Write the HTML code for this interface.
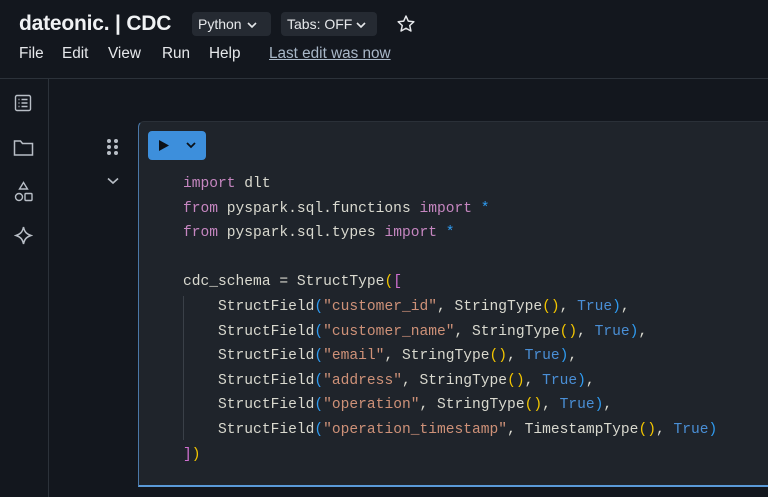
<!DOCTYPE html>
<html><head><style>
*{margin:0;padding:0;box-sizing:border-box}
body{width:768px;height:497px;background:#13171e;overflow:hidden;position:relative;font-family:"Liberation Sans",sans-serif;color:#e6e8eb}
.title{position:absolute;left:19px;top:12px;font-size:21px;font-weight:bold;color:#f0f2f4;letter-spacing:-0.2px}
.pill{position:absolute;top:12px;height:24px;background:#252a32;border-radius:4px;font-size:14px;line-height:24px;padding-left:6px;color:#e6e8eb}
.menu{position:absolute;top:45px;font-size:15.3px;color:#e6e8eb}
.hr{position:absolute;left:0;top:78px;width:768px;height:1px;background:#2c323a}
.vr{position:absolute;left:48px;top:79px;width:1px;height:418px;background:#2c323a}
.cell{position:absolute;left:138px;top:121px;width:640px;height:366px;background:#1f242b;border-left:1px solid #4a78a8;border-bottom:2px solid #5a9ad8;border-top:1px solid #2a3038;border-top-left-radius:6px}
.run{position:absolute;left:148px;top:131px;width:58px;height:29px;background:#3d8fdc;border-radius:4px}
.code{position:absolute;left:183px;top:172px;font-family:"Liberation Mono",monospace;font-size:14.6px;line-height:24.6px;white-space:pre;color:#d9d9cf}
.k{color:#c586c0}.s{color:#ce9178}.t{color:#4a8fd6}.y{color:#f2c500}.b{color:#2f9bf0}.p{color:#d070d0}
.guide{position:absolute;left:183px;top:296px;width:1px;height:144px;background:#3a4048}
</style></head><body>
<div class="title">dateonic. | CDC</div>
<div class="pill" style="left:192px;width:79px">Python <svg width="10" height="8" viewBox="0 0 10 8" style="margin-left:2px"><path d="M1 2l4 4 4-4" stroke="#e6e8eb" stroke-width="1.6" fill="none"/></svg></div>
<div class="pill" style="left:281px;width:96px">Tabs: OFF <svg width="10" height="8" viewBox="0 0 10 8"><path d="M1 2l4 4 4-4" stroke="#e6e8eb" stroke-width="1.6" fill="none"/></svg></div>
<svg style="position:absolute;left:396px;top:14px" width="20" height="20" viewBox="0 0 24 24"><path d="M12 2.5l2.8 6.1 6.6.7-4.9 4.5 1.4 6.6L12 17.1l-5.9 3.3 1.4-6.6-4.9-4.5 6.6-.7z" fill="none" stroke="#e6e8eb" stroke-width="1.8" stroke-linejoin="round"/></svg>
<div class="menu" style="left:19px">File</div>
<div class="menu" style="left:62px">Edit</div>
<div class="menu" style="left:108px">View</div>
<div class="menu" style="left:162px">Run</div>
<div class="menu" style="left:209px">Help</div>
<div class="menu" style="left:269px;color:#a9b8c8;text-decoration:underline">Last edit was now</div>
<div class="hr"></div><div class="vr"></div>
<svg style="position:absolute;left:14px;top:94px" width="18" height="18" viewBox="0 0 18 18" fill="none" stroke="#b8bec6" stroke-width="1.4"><rect x="1.5" y="1.5" width="15" height="15" rx="1.5"/><path d="M4.5 5.5h1M4.5 9h1M4.5 12.5h1M7.5 5.5h6M7.5 9h6M7.5 12.5h6"/></svg>
<svg style="position:absolute;left:13px;top:139px" width="21" height="18" viewBox="0 0 21 18" fill="none" stroke="#b8bec6" stroke-width="1.5"><path d="M1.5 2h6l2 2.5h10v11.5h-18z"/></svg>
<svg style="position:absolute;left:14px;top:181px" width="19" height="22" viewBox="0 0 19 22" fill="none" stroke="#b8bec6" stroke-width="1.4"><path d="M9.5 1.5l4 6.5h-8z"/><circle cx="5" cy="16" r="3.5"/><rect x="11" y="12.5" width="7" height="7" rx="1"/></svg>
<svg style="position:absolute;left:14px;top:225px" width="19" height="22" viewBox="0 0 19 22" fill="none" stroke="#b8bec6" stroke-width="1.5"><path d="M9.5 2c1 5 3 7 7.5 8.5-4.5 1.5-6.5 3.5-7.5 8.5-1-5-3-7-7.5-8.5 4.5-1.5 6.5-3.5 7.5-8.5z"/></svg>
<svg style="position:absolute;left:106px;top:138px" width="14" height="18" viewBox="0 0 14 18" fill="#b8bec6"><circle cx="3" cy="3" r="2"/><circle cx="10" cy="3" r="2"/><circle cx="3" cy="9" r="2"/><circle cx="10" cy="9" r="2"/><circle cx="3" cy="15" r="2"/><circle cx="10" cy="15" r="2"/></svg>
<svg style="position:absolute;left:107px;top:177px" width="12" height="8" viewBox="0 0 12 8"><path d="M1 1.5l5 4.5 5-4.5" stroke="#b8bec6" stroke-width="1.6" fill="none"/></svg>
<div class="cell"></div>
<div class="run"><svg style="position:absolute;left:11px;top:9px" width="10" height="11" viewBox="0 0 10 11"><path d="M0 0l10 5.5L0 11z" fill="#0c1118"/></svg><svg style="position:absolute;left:38px;top:11px" width="10" height="7" viewBox="0 0 10 7"><path d="M1 1l4 4 4-4" stroke="#0c1118" stroke-width="1.8" fill="none"/></svg></div>
<div class="guide"></div>
<div class="code"><span class="k">import</span> dlt
<span class="k">from</span> pyspark.sql.functions <span class="k">import</span> <span class="b">*</span>
<span class="k">from</span> pyspark.sql.types <span class="k">import</span> <span class="b">*</span>

cdc_schema = StructType<span class="y">(</span><span class="p">[</span>
    StructField<span class="b">(</span><span class="s">"customer_id"</span>, StringType<span class="y">()</span>, <span class="t">True</span><span class="b">)</span>,
    StructField<span class="b">(</span><span class="s">"customer_name"</span>, StringType<span class="y">()</span>, <span class="t">True</span><span class="b">)</span>,
    StructField<span class="b">(</span><span class="s">"email"</span>, StringType<span class="y">()</span>, <span class="t">True</span><span class="b">)</span>,
    StructField<span class="b">(</span><span class="s">"address"</span>, StringType<span class="y">()</span>, <span class="t">True</span><span class="b">)</span>,
    StructField<span class="b">(</span><span class="s">"operation"</span>, StringType<span class="y">()</span>, <span class="t">True</span><span class="b">)</span>,
    StructField<span class="b">(</span><span class="s">"operation_timestamp"</span>, TimestampType<span class="y">()</span>, <span class="t">True</span><span class="b">)</span>
<span class="p">]</span><span class="y">)</span></div>
</body></html>
